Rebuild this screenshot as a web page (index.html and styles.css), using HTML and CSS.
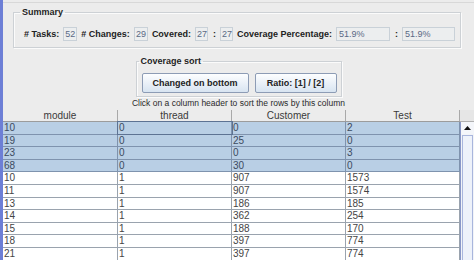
FILE: index.html
```html
<!DOCTYPE html>
<html lang="en">
<head>
    <meta charset="UTF-8">
    <title>Coverage</title>
    <link rel="stylesheet" href="styles.css">
</head>
<body>
    <div class="window">
        <div class="topline"></div>

        <!-- Summary box -->
        <fieldset class="group summary">
            <legend>Summary</legend>
            <div class="stats">
                <span class="label"># Tasks:</span>
                <span class="field w14">52</span>
                <span class="label"># Changes:</span>
                <span class="field w14">29</span>
                <span class="label">Covered:</span>
                <span class="field w13">27</span>
                <span class="label colon">:</span>
                <span class="field w13">27</span>
                <span class="label">Coverage Percentage:</span>
                <span class="field w54">51.9%</span>
                <span class="label colon">:</span>
                <span class="field w53">51.9%</span>
            </div>
        </fieldset>

        <!-- Sort box -->
        <fieldset class="group sort">
            <legend>Coverage sort</legend>
            <div class="buttons">
                <button class="btn btn-wide">Changed on bottom</button>
                <button class="btn btn-ratio">Ratio: [1] / [2]</button>
            </div>
        </fieldset>

        <p class="hint">Click on a column header to sort the rows by this column</p>

        <div class="grid-wrap">
            <div class="data">
                <div class="row head"><span>module</span><span>thread</span><span>Customer</span><span>Test</span></div>
                <div class="row sel"><span>10</span><span class="focus">0</span><span>0</span><span>2</span></div>
                <div class="row sel"><span>19</span><span>0</span><span>25</span><span>0</span></div>
                <div class="row sel"><span>23</span><span>0</span><span>0</span><span>3</span></div>
                <div class="row sel"><span>68</span><span>0</span><span>30</span><span>0</span></div>
                <div class="row"><span>10</span><span>1</span><span>907</span><span>1573</span></div>
                <div class="row"><span>11</span><span>1</span><span>907</span><span>1574</span></div>
                <div class="row"><span>13</span><span>1</span><span>186</span><span>185</span></div>
                <div class="row"><span>14</span><span>1</span><span>362</span><span>254</span></div>
                <div class="row"><span>15</span><span>1</span><span>188</span><span>170</span></div>
                <div class="row"><span>18</span><span>1</span><span>397</span><span>774</span></div>
                <div class="row"><span>21</span><span>1</span><span>397</span><span>774</span></div>
                <div class="row"><span>22</span><span>1</span><span>11477</span><span>14669</span></div>
            </div>
            <div class="scrollbar">
                <div class="sb-corner"></div>
                <div class="sb-up">
                    <svg width="7" height="4" viewBox="0 0 7 4"><path d="M0 4 L3.5 0 L7 4 Z" fill="#111"/></svg>
                </div>
                <div class="sb-track">
                    <div class="sb-thumb"></div>
                </div>
            </div>
        </div>
    </div>
</body>
</html>
```

FILE: styles.css
```css
/* Base */
body {
    margin: 0;
    font-family: 'Liberation Sans', Arial, sans-serif;
    color: #222;
}

.window {
    height: 260px;
    overflow: hidden;
    background-color: #ececec;
    border-left: 3px solid #6d7fd6;
}

.topline {
    height: 2px;
    border-bottom: 1px solid #d8d8d8;
}

/* Titled boxes */
.group {
    margin: 0;
    padding: 0;
    border: 1px solid #cdd1d5;
    box-shadow: inset 1px 1px 0 #fbfbfb, 1px 1px 0 #fbfbfb;
    min-inline-size: 0;
}

.group legend {
    padding: 0 2px;
    font-size: 9px;
    line-height: 12px;
    font-weight: bold;
    color: #1e1e1e;
}

.summary {
    margin: 3px 13px 0 10px;
    padding: 9px 0 6px 6px;
}

.stats {
    display: flex;
    align-items: center;
    padding-left: 4px;
    height: 14px;
}

.label {
    font-size: 9px;
    font-weight: bold;
    color: #222;
    margin: 0 4px 0 0;
    white-space: nowrap;
}

.label.colon {
    margin: 0 4px 0 1px;
}

.field {
    box-sizing: border-box;
    height: 14px;
    padding: 0 2px;
    font-size: 9px;
    line-height: 12px;
    color: #5a6985;
    background-color: #eceeef;
    border: 1px solid #c9d1d8;
    margin-right: 4px;
}

.w13 { width: 13px; padding: 0 1px; }
.w14 { width: 14px; padding: 0 1px; }
.w53 { width: 53px; }
.w54 { width: 54px; }

.sort {
    box-sizing: border-box;
    width: 206px;
    margin: 7px auto 0;
    padding: 6px 0 3px 2px;
}

.buttons {
    display: flex;
    gap: 6px;
    margin-left: 3px;
}

.btn {
    height: 20px;
    padding: 0;
    font-family: inherit;
    font-size: 9px;
    font-weight: bold;
    color: #222;
    background: linear-gradient(#fdfeff, #d8e4f1);
    border: 1px solid #8d9cb5;
    border-radius: 2px;
}

.btn-wide { width: 107px; }
.btn-ratio { width: 82px; }

.hint {
    margin: 1px 0 2px;
    font-size: 8.5px;
    line-height: 10px;
    text-align: center;
    color: #2a2a2a;
}

/* Table */
.grid-wrap {
    display: flex;
}

.data {
    width: 457px;
    font-size: 10px;
}

.row {
    display: grid;
    grid-template-columns: 115px 114px 114px 114px;
    box-sizing: border-box;
    height: 12.6px;
    background-color: #fff;
    border-bottom: 1px solid #9aa3ae;
}

.row span {
    box-sizing: border-box;
    padding-left: 1px;
    line-height: 11.6px;
    color: #454545;
    border-right: 1px solid #9aa3ae;
    white-space: nowrap;
    overflow: hidden;
}

.row.head {
    height: 12px;
    background-color: #ececec;
    border-bottom-color: #9c9c9c;
}

.row.head span {
    padding: 0;
    line-height: 11px;
    text-align: center;
    color: #3a3a3a;
    border-right-color: #a9a9a9;
}

.row.sel {
    background-color: #b9cfe5;
    border-bottom-color: #7f93ae;
}

.row.sel span {
    color: #3c4b60;
    border-right-color: #7f93ae;
}

.row span.focus {
    outline: 1px solid #5d7393;
    outline-offset: 0;
}

/* Scrollbar */
.scrollbar {
    width: 14px;
    display: flex;
    flex-direction: column;
}

.sb-corner {
    height: 11px;
    background-color: #e6e6e6;
    border-bottom: 1px solid #b0b0b0;
}

.sb-up {
    height: 12px;
    display: flex;
    align-items: center;
    justify-content: center;
    background-color: #f4f6fa;
    border-left: 1px solid #8a98c8;
}

.sb-track {
    flex: 1;
    padding-top: 1px;
    background-color: #f2f4f8;
    border-left: 1px solid #8a98c8;
}

.sb-thumb {
    height: 140px;
    margin: 0 1px;
    background-color: #eef2fa;
    border: 1px solid #a9b6dd;
}
```
